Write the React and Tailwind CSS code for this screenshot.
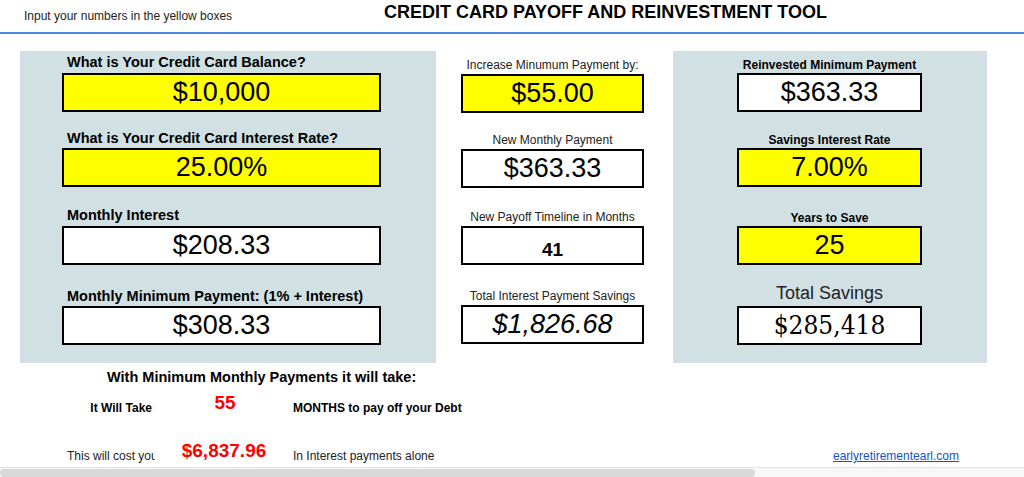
import React from "react";

const Box = ({ yellow, className = "", children }) => (
  <div
    className={`flex h-[39px] items-center justify-center border-2 border-black ${
      yellow ? "bg-[#ffff00]" : "bg-white"
    } ${className}`}
  >
    {children}
  </div>
);

const App = () => {
  return (
    <div className="w-[1024px] h-[477px] overflow-hidden bg-white text-black font-['Liberation_Sans',Arial,sans-serif]">
      {/* header */}
      <div className="flex h-[34px] items-start border-b-2 border-[#4a86e8]">
        <span className="mt-[9px] w-[384px] pl-[24px] text-[12px] leading-[14px] text-[#222]">
          Input your numbers in the yellow boxes
        </span>
        <span className="mt-[1px] text-[18px] font-bold leading-[22px]">
          CREDIT CARD PAYOFF AND REINVESTMENT TOOL
        </span>
      </div>

      {/* three columns */}
      <div className="mt-[17px] flex pl-[20px]">
        {/* left panel */}
        <div className="h-[312px] w-[416px] bg-[#d0e0e3] pl-[42px]">
          <div className="w-[319px]">
            <div className="h-[22px] whitespace-nowrap pl-[5px] text-[14.5px] font-bold leading-[22px]">
              What is Your Credit Card Balance?
            </div>
            <Box yellow className="text-[27px]">$10,000</Box>

            <div className="mt-[16px] h-[20px] whitespace-nowrap pl-[5px] text-[14.5px] font-bold leading-[20px]">
              What is Your Credit Card Interest Rate?
            </div>
            <Box yellow className="text-[27px]">25.00%</Box>

            <div className="mt-[18px] h-[21px] pl-[5px] text-[14.5px] font-bold leading-[21px]">
              Monthly Interest
            </div>
            <Box className="text-[27px]">$208.33</Box>

            <div className="mt-[22px] h-[19px] whitespace-nowrap pl-[5px] text-[14.5px] font-bold leading-[19px]">
              Monthly Minimum Payment: (1% + Interest)
            </div>
            <Box className="text-[27px]">$308.33</Box>
          </div>
        </div>

        {/* middle column */}
        <div className="ml-[25px] w-[183px]">
          <div className="mt-[5px] h-[18px] whitespace-nowrap text-center text-[12px] leading-[18px] text-[#222]">
            Increase Minumum Payment by:
          </div>
          <Box yellow className="text-[27px]">$55.00</Box>

          <div className="mt-[18px] h-[18px] text-center text-[12px] leading-[18px] text-[#222]">
            New Monthly Payment
          </div>
          <Box className="text-[27px]">$363.33</Box>

          <div className="mt-[20px] h-[18px] whitespace-nowrap text-center text-[12px] leading-[18px] text-[#222]">
            New Payoff Timeline in Months
          </div>
          <Box className="!items-end pb-[2px] text-[19px] font-bold leading-[22px]">41</Box>

          <div className="mt-[22px] h-[18px] whitespace-nowrap text-center text-[12px] leading-[18px] text-[#222]">
            Total Interest Payment Savings
          </div>
          <Box className="text-[27px] italic">$1,826.68</Box>
        </div>

        {/* right panel */}
        <div className="ml-[29px] h-[312px] w-[314px] bg-[#d0e0e3] pl-[64px]">
          <div className="w-[185px]">
            <div className="flex h-[22px] items-end justify-center whitespace-nowrap pb-[1px] text-[12px] font-bold leading-[14px]">
              Reinvested Minimum Payment
            </div>
            <Box className="text-[27px]">$363.33</Box>

            <div className="mt-[16px] flex h-[20px] items-end justify-center pb-[1px] text-[12px] font-bold leading-[14px]">
              Savings Interest Rate
            </div>
            <Box yellow className="text-[27px]">7.00%</Box>

            <div className="mt-[18px] flex h-[21px] items-end justify-center pb-[1px] text-[12px] font-bold leading-[14px]">
              Years to Save
            </div>
            <Box yellow className="text-[27px]">25</Box>

            <div className="mt-[22px] flex h-[19px] items-end justify-center pb-[3px] text-[18px] leading-[20px] text-[#222]">
              Total Savings
            </div>
            <Box className="font-['DejaVu_Serif',serif] text-[26px] [font-stretch:condensed]">
              $285,418
            </Box>
          </div>
        </div>
      </div>

      {/* minimum payment summary */}
      <div className="mt-[6px] pl-[107px] text-[14.5px] font-bold leading-[17px]">
        With Minimum Monthly Payments it will take:
      </div>

      <div className="mt-[6px] flex h-[30px] items-start pl-[60px]">
        <div className="mt-[9px] w-[97px] pr-[5px] text-right text-[12px] font-bold leading-[14px]">
          It Will Take
        </div>
        <div className="w-[136px] text-center text-[19px] font-bold leading-[22px] text-[#ff0000]">
          55
        </div>
        <div className="mt-[9px] text-[12px] font-bold leading-[14px]">
          MONTHS to pay off your Debt
        </div>
      </div>

      <div className="mt-[18px] flex h-[22px] items-start pl-[60px]">
        <div className="mt-[9px] w-[95px] overflow-hidden whitespace-nowrap pl-[7px] text-[12px] leading-[14px] text-[#222]">
          This will cost you
        </div>
        <div className="w-[138px] text-center text-[19px] font-bold leading-[22px] text-[#ff0000]">
          $6,837.96
        </div>
        <div className="mt-[9px] w-[540px] text-[12px] leading-[14px] text-[#222]">
          In Interest payments alone
        </div>
        <a
          href="#"
          className="mt-[9px] text-[12px] leading-[14px] text-[#1155cc] underline"
        >
          earlyretirementearl.com
        </a>
      </div>

      {/* horizontal scrollbar */}
      <div className="mt-[5px] h-[10px] border-t border-[#e3e3e3] bg-[#f8f8f8] pt-[1px]">
        <div className="h-[8px] w-[755px] rounded-full bg-[#d9d9d9]" />
      </div>
    </div>
  );
};

export default App;
